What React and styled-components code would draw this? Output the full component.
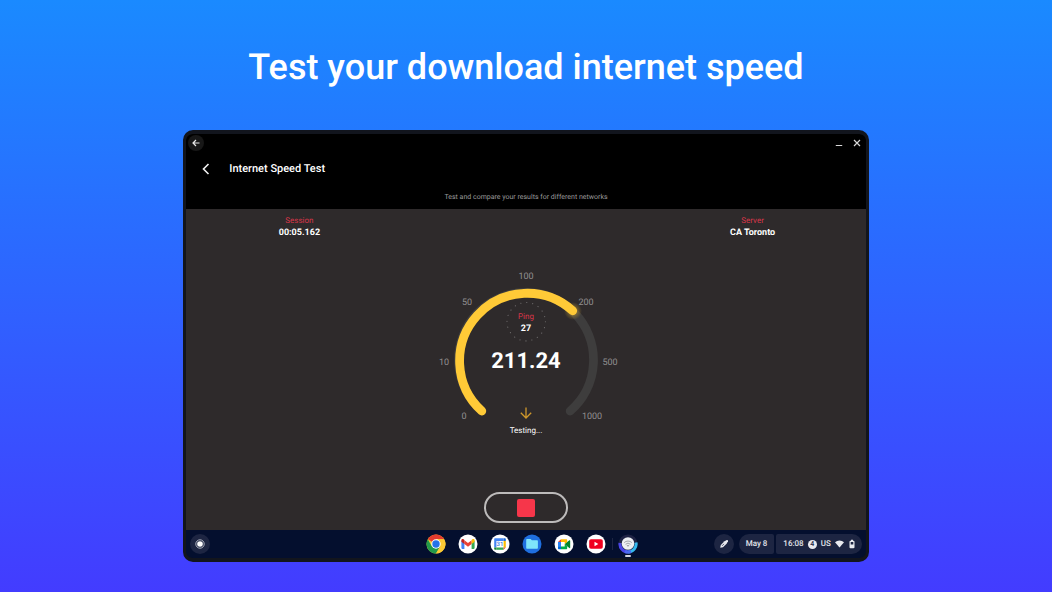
import React from 'react';
import styled, { createGlobalStyle } from 'styled-components';

const GlobalStyle = createGlobalStyle`
  *, *::before, *::after {
    box-sizing: border-box;
  }

  body {
    margin: 0;
    font-family: Roboto, 'Liberation Sans', sans-serif;
    color: #FFFFFF;
    text-rendering: geometricPrecision;
  }

  button {
    display: flex;
    align-items: center;
    justify-content: center;
    margin: 0;
    padding: 0;
    border: 0;
    background: none;
    color: inherit;
    font-family: inherit;
    text-rendering: inherit;
    cursor: pointer;
  }

  svg {
    display: block;
  }
`;

const Page = styled.main`
  display: flex;
  flex-direction: column;
  align-items: center;
  min-height: 100vh;
  padding: 45px 16px 30px;
  background: linear-gradient(#1A8AFF, #433CFF);
`;

const Headline = styled.h1`
  margin: 0 0 41px;
  font-size: 36px;
  line-height: 44px;
  font-weight: 500;
  text-align: center;
`;

const Device = styled.section`
  display: flex;
  flex-direction: column;
  width: 67.2%;
  min-width: 560px;
  border: 3px solid #12151D;
  border-top-width: 4px;
  border-bottom-width: 4px;
  border-radius: 10px;
  background-color: #12151D;
  overflow: hidden;
`;

const AppHeader = styled.header`
  border-radius: 6px 6px 0 0;
  background-color: #000000;
`;

const TitleBar = styled.div`
  display: flex;
  align-items: center;
  justify-content: space-between;
  height: 18px;
  padding: 0 4px 0 2px;
`;

const WindowBack = styled.button`
  width: 16px;
  height: 16px;
  border-radius: 50%;
  background-color: #171717;
`;

const WindowControls = styled.div`
  display: flex;
  gap: 8px;
`;

const WindowButton = styled.button`
  width: 10px;
  height: 16px;
`;

const Toolbar = styled.div`
  display: flex;
  align-items: center;
  gap: 15px;
  height: 34px;
  padding-left: 12px;
`;

const BackButton = styled.button`
  width: 16px;
  height: 24px;
`;

const Title = styled.h2`
  margin: 0;
  font-size: 11px;
  line-height: 16px;
  font-weight: 500;
`;

const Subtitle = styled.p`
  margin: 0;
  padding: 6px 0;
  font-size: 7px;
  line-height: 11px;
  text-align: center;
  color: #9A9A9A;
`;

const Content = styled.div`
  display: flex;
  flex-direction: column;
  align-items: center;
  padding: 6px 0 7px;
  background-color: #2E2A2B;
`;

const Stats = styled.dl`
  display: flex;
  justify-content: space-between;
  width: 100%;
  margin: 0;
`;

const Stat = styled.div`
  width: 33.3%;
  text-align: center;
`;

const StatLabel = styled.dt`
  font-size: 8px;
  line-height: 11px;
  color: #D8364A;
`;

const StatValue = styled.dd`
  margin: 0;
  font-size: 9px;
  line-height: 14px;
  font-weight: 700;
`;

const Gauge = styled.div`
  display: grid;
  justify-items: center;
  margin-top: 20px;

  > * {
    grid-area: 1 / 1;
  }
`;

const TickLabel = styled.text`
  font-size: 9px;
  fill: #929091;
  text-anchor: middle;
`;

const Readout = styled.div`
  display: flex;
  flex-direction: column;
  align-items: center;
  padding-top: 42px;
`;

const Ping = styled.dl`
  display: flex;
  flex-direction: column;
  justify-content: center;
  align-items: center;
  height: 42px;
  margin: 0;
`;

const Speed = styled.output`
  margin: 2px 0 29px;
  font-size: 22px;
  line-height: 32px;
  font-weight: 700;
`;

const Status = styled.p`
  margin: 6px 0 0;
  font-size: 8px;
  line-height: 12px;
`;

const StopButton = styled.button`
  width: 84px;
  height: 31px;
  margin-top: 52px;
  border: 2px solid #BDBBBB;
  border-radius: 16px;
`;

const StopIcon = styled.span`
  width: 18px;
  height: 18px;
  border-radius: 2px;
  background-color: #F6364A;
`;

const Shelf = styled.footer`
  display: grid;
  grid-template-columns: 1fr auto 1fr;
  align-items: center;
  height: 28px;
  padding: 0 4px;
  border-radius: 0 0 6px 6px;
  background-color: #040F2E;
`;

const ShelfCircle = styled.button`
  width: 20px;
  height: 20px;
  border-radius: 50%;
  background-color: #1D2542;
`;

const Apps = styled.nav`
  display: flex;
  align-items: center;
  gap: 12px;
  padding-left: 11px;
`;

const AppButton = styled.button`
  position: relative;
  width: 20px;
  height: 20px;

  &::before {
    content: '';
    display: ${props => (props.$active ? 'block' : 'none')};
    position: absolute;
    left: -6px;
    top: 4px;
    width: 1px;
    height: 12px;
    background-color: #1D2542;
  }

  &::after {
    content: '';
    display: ${props => (props.$active ? 'block' : 'none')};
    position: absolute;
    left: 7px;
    top: 21px;
    width: 6px;
    height: 2px;
    border-radius: 1px;
    background-color: #D5D7DE;
  }
`;

const Tray = styled.div`
  display: flex;
  justify-content: flex-end;
`;

const TrayPill = styled.button`
  gap: 4px;
  height: 20px;
  margin-left: ${props => (props.$end ? '2px' : '5px')};
  padding: ${props => (props.$end ? '0 6px 0 7px' : '0 7px')};
  border-radius: ${props => (props.$end ? '2px 10px 10px 2px' : '10px 2px 2px 10px')};
  background-color: #1D2542;
  color: #E4E6EC;
  font-size: 8px;
  line-height: 10px;
  font-weight: 500;
  white-space: nowrap;
`;

const CountBadge = styled.span`
  width: 9px;
  height: 9px;
  border-radius: 50%;
  background-color: #E9EAEF;
  color: #1D2542;
  font-size: 7px;
  line-height: 9px;
  text-align: center;
`;

const ticks = [
  { label: '0', x: 38, y: 159 },
  { label: '10', x: 18, y: 105 },
  { label: '50', x: 41, y: 45 },
  { label: '100', x: 100, y: 19 },
  { label: '200', x: 160, y: 45 },
  { label: '500', x: 184, y: 105 },
  { label: '1000', x: 166, y: 159 }
];

const Dial = () => (
  <svg width="200" height="180" viewBox="0 0 200 180" fill="none" aria-hidden="true">
    <defs>
      <radialGradient id="glow">
        <stop offset="30%" stopColor="#FFCA37" stopOpacity="0.4" />
        <stop offset="100%" stopColor="#FFCA37" stopOpacity="0" />
      </radialGradient>
    </defs>
    <g strokeWidth="8.8" strokeLinecap="round">
      <path d="M55.8 151A67.5 67.5 0 1 1 144.2 151" stroke="#3E3D3D" />
      <circle cx="147" cy="51" r="9" fill="url(#glow)" />
      <path d="M55.8 151A67.5 67.5 0 0 1 146.7 50.8" stroke="#FFCA37" />
    </g>
    <circle
      cx="100.2"
      cy="61.7"
      r="19.2"
      stroke="#737071"
      strokeWidth="1.1"
      strokeLinecap="round"
      strokeDasharray="0.1 5.93"
    />
    {ticks.map(tick => (
      <TickLabel key={tick.label} x={tick.x} y={tick.y}>{tick.label}</TickLabel>
    ))}
  </svg>
);

const DownArrow = () => (
  <svg width="12" height="12" viewBox="0 0 12 12" fill="none" stroke="#CF982B" strokeWidth="1.3">
    <path d="M6 .5v10.3M.8 5.8L6 11l5.2-5.2" />
  </svg>
);

const ChromeIcon = () => (
  <svg width="20" height="20" viewBox="0 0 20 20">
    <circle cx="10" cy="10" r="9.5" fill="#FBC934" />
    <path d="M10 10L1.8 5.2A9.5 9.5 0 0 1 18.2 5.2H10z" fill="#E33B2E" />
    <path d="M1.8 5.2A9.5 9.5 0 0 0 10 19.5L14.1 12.4 10 10 5.9 12.4z" fill="#229A4A" />
    <path d="M10 5.2h8.2A9.5 9.5 0 0 1 10 19.5l4.2-7.1z" fill="#FBC934" />
    <circle cx="10" cy="10" r="4.7" fill="#FFFFFF" />
    <circle cx="10" cy="10" r="3.7" fill="#2673E8" />
  </svg>
);

const GmailIcon = () => (
  <svg width="20" height="20" viewBox="0 0 20 20">
    <circle cx="10" cy="10" r="9.5" fill="#FFFFFF" />
    <path d="M3.4 6.5v7.6c0 .5.4.8.8.8h2.2V8.2z" fill="#4285F4" />
    <path d="M16.6 6.5v7.6c0 .5-.4.8-.8.8h-2.2V8.2z" fill="#34A853" />
    <path d="M6.4 6.3L10 8.9l3.6-2.6V10L10 12.7 6.4 10z" fill="#EA4335" />
    <path d="M3.4 6.4c0-1.4 1.4-1.8 2.4-1l.6.5V10l-3-2.3z" fill="#C5221F" />
    <path d="M16.6 6.4c0-1.4-1.4-1.8-2.4-1l-.6.5V10l3-2.3z" fill="#FBBC04" />
  </svg>
);

const CalendarIcon = () => (
  <svg width="20" height="20" viewBox="0 0 20 20">
    <circle cx="10" cy="10" r="9.5" fill="#FFFFFF" />
    <path d="M4.2 5.2c0-.6.4-1 1-1h8.4v2.7H6.4v6.6H4.2z" fill="#4285F4" />
    <path d="M13.6 4.2h1.2c.6 0 1 .4 1 1v1.7h-2.2z" fill="#1967D2" />
    <path d="M13.6 6.9h2.2v6.6h-2.2z" fill="#FBBC04" />
    <path d="M6.4 13.5h7.2v2.3H6.4z" fill="#34A853" />
    <path d="M4.2 13.5h2.2v2.3H5.2c-.6 0-1-.4-1-1z" fill="#188038" />
    <path d="M13.6 13.5h2.2l-2.2 2.3z" fill="#EA4335" />
    <text x="10" y="12.2" fontSize="6" fontWeight="500" textAnchor="middle" fill="#3975DC">31</text>
  </svg>
);

const FilesIcon = () => (
  <svg width="20" height="20" viewBox="0 0 20 20">
    <circle cx="10" cy="10" r="9.5" fill="#1F6FE0" />
    <path d="M4.2 6c0-.6.4-1 1-1h3.4l1.3 1.3h5c.6 0 1 .4 1 1v6.5c0 .6-.4 1-1 1H5.2c-.6 0-1-.4-1-1z" fill="#7FE4FA" />
  </svg>
);

const MeetIcon = () => (
  <svg width="20" height="20" viewBox="0 0 20 20">
    <circle cx="10" cy="10" r="9.5" fill="#FFFFFF" />
    <path d="M4 7.9h3v4.6H4z" fill="#2684FC" />
    <path d="M7 5.2v2.7H4z" fill="#EA4335" />
    <path d="M4 12.3h3v2.9H5c-.6 0-1-.4-1-1z" fill="#0066DA" />
    <path d="M7 5.2h5.2c.6 0 1 .4 1 1v2.1l-2.5 1.9V7.9H7z" fill="#FFBA00" />
    <path d="M7 12.5h3.7v-2.3l2.5 2v2c0 .6-.4 1-1 1H7z" fill="#00AC47" />
    <path d="M10.7 10.2l4.6-3.9c.3-.3.9-.1.9.4v7c0 .5-.6.7-.9.4z" fill="#00832D" />
  </svg>
);

const YoutubeIcon = () => (
  <svg width="20" height="20" viewBox="0 0 20 20">
    <circle cx="10" cy="10" r="9.5" fill="#FFFFFF" />
    <rect x="3.2" y="5.2" width="13.6" height="9.6" rx="1.8" fill="#F0001F" />
    <path d="M8.5 7.8v4.4l3.8-2.2z" fill="#FFFFFF" />
  </svg>
);

const SpeedIcon = () => (
  <svg width="20" height="20" viewBox="0 0 20 20" fill="none">
    <circle cx="10" cy="10" r="8" stroke="#1F2344" strokeWidth="3" />
    <path d="M2 9A8 8 0 0 0 10 18" stroke="#4B45E8" strokeWidth="3" />
    <path d="M10 18A8 8 0 0 0 18 8.5" stroke="#35B9EE" strokeWidth="3" />
    <path d="M7 17.5A8 8 0 0 0 13 17.5" stroke="#4A68F0" strokeWidth="3" />
    <circle cx="10" cy="9.5" r="6.3" fill="#EDEFF2" />
    <path d="M6.2 8.6a5.4 5.4 0 0 1 7.6 0M7.6 10.3a3.4 3.4 0 0 1 4.8 0" stroke="#A3A5AC" strokeWidth="1" />
    <path d="M8.6 11.2h2.8L10 12.8z" fill="#85878F" />
  </svg>
);

const apps = [
  { name: 'Chrome', Icon: ChromeIcon },
  { name: 'Gmail', Icon: GmailIcon },
  { name: 'Calendar', Icon: CalendarIcon },
  { name: 'Files', Icon: FilesIcon },
  { name: 'Meet', Icon: MeetIcon },
  { name: 'YouTube', Icon: YoutubeIcon },
  { name: 'Speed Test', Icon: SpeedIcon, active: true }
];

export default function App() {
  return (
    <Page>
      <GlobalStyle />
      <Headline>Test your download internet speed</Headline>
      <Device>
        <AppHeader>
          <TitleBar>
            <WindowBack aria-label="Go back">
              <svg width="8" height="8" viewBox="0 0 8 8" fill="none" stroke="#E8E8E8" strokeWidth="1.2">
                <path d="M7.5 4H1.3M4 1L1 4l3 3" />
              </svg>
            </WindowBack>
            <WindowControls>
              <WindowButton aria-label="Minimize">
                <svg width="8" height="8" viewBox="0 0 8 8" stroke="#D8D8D8" strokeWidth="1.2">
                  <path d="M.8 6.5h6.4" />
                </svg>
              </WindowButton>
              <WindowButton aria-label="Close">
                <svg width="8" height="8" viewBox="0 0 8 8" stroke="#D8D8D8" strokeWidth="1.2">
                  <path d="M1 1l6 6M7 1L1 7" />
                </svg>
              </WindowButton>
            </WindowControls>
          </TitleBar>
          <Toolbar>
            <BackButton aria-label="Back">
              <svg width="8" height="12" viewBox="0 0 8 12" fill="none" stroke="#F2F2F2" strokeWidth="1.6">
                <path d="M6.5 1L1.5 6l5 5" />
              </svg>
            </BackButton>
            <Title>Internet Speed Test</Title>
          </Toolbar>
          <Subtitle>Test and compare your results for different networks</Subtitle>
        </AppHeader>
        <Content>
          <Stats>
            <Stat>
              <StatLabel>Session</StatLabel>
              <StatValue>00:05.162</StatValue>
            </Stat>
            <Stat>
              <StatLabel>Server</StatLabel>
              <StatValue>CA Toronto</StatValue>
            </Stat>
          </Stats>
          <Gauge>
            <Dial />
            <Readout>
              <Ping>
                <StatLabel>Ping</StatLabel>
                <StatValue>27</StatValue>
              </Ping>
              <Speed>211.24</Speed>
              <DownArrow />
              <Status>Testing...</Status>
            </Readout>
          </Gauge>
          <StopButton aria-label="Stop test">
            <StopIcon />
          </StopButton>
        </Content>
        <Shelf>
          <ShelfCircle aria-label="Launcher">
            <svg width="10" height="10" viewBox="0 0 10 10" fill="none">
              <circle cx="5" cy="5" r="4.2" stroke="#AEB2BF" strokeWidth="1" />
              <circle cx="5" cy="5" r="2.8" fill="#FFFFFF" />
            </svg>
          </ShelfCircle>
          <Apps aria-label="Apps">
            {apps.map(({ name, Icon, active }) => (
              <AppButton key={name} aria-label={name} $active={active}>
                <Icon />
              </AppButton>
            ))}
          </Apps>
          <Tray>
            <ShelfCircle aria-label="Stylus tools">
              <svg width="10" height="10" viewBox="0 0 10 10">
                <path d="M1.2 8.8l.6-2.8 3.7-3.8L7.8 1c.8-.1 1.3.5 1.2 1.2L7.6 4.8 4 8.2z" fill="#E9EAEF" />
                <path d="M3 6.9l2-2" stroke="#1D2542" strokeWidth=".7" />
              </svg>
            </ShelfCircle>
            <TrayPill>May 8</TrayPill>
            <TrayPill $end>
              16:08
              <CountBadge>4</CountBadge>
              US
              <svg width="9" height="8" viewBox="0 0 9 8">
                <path d="M0 2.2a6.8 6.8 0 0 1 9 0L4.5 7.5z" fill="#E9EAEF" />
              </svg>
              <svg width="8" height="10" viewBox="0 0 8 10">
                <path d="M3 .8h2v1h.6c.5 0 .9.4.9.9v5.6c0 .5-.4.9-.9.9H2.4c-.5 0-.9-.4-.9-.9V2.7c0-.5.4-.9.9-.9H3z" fill="#E9EAEF" />
                <path d="M2.7 3h2.6v2.5H2.7z" fill="#1D2542" />
              </svg>
            </TrayPill>
          </Tray>
        </Shelf>
      </Device>
    </Page>
  );
}
